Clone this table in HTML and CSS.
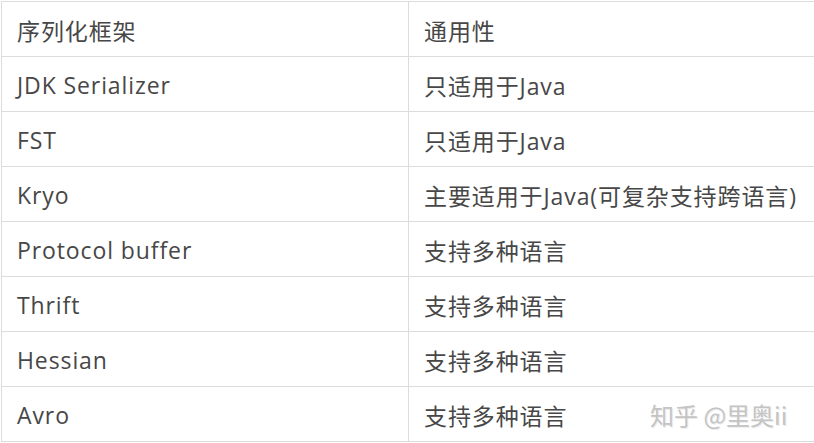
FILE: index.html
```html
<!DOCTYPE html>
<html lang="zh-CN">
<head>
<meta charset="utf-8">
<link rel="stylesheet" href="styles.css">
</head>
<body>
<div class="page">
  <table class="grid">
    <tr><td class="c1">序列化框架</td><td class="c2">通用性</td></tr>
    <tr><td class="c1">JDK Serializer</td><td class="c2">只适用于Java</td></tr>
    <tr><td class="c1">FST</td><td class="c2">只适用于Java</td></tr>
    <tr><td class="c1">Kryo</td><td class="c2">主要适用于Java(可复杂支持跨语言)</td></tr>
    <tr><td class="c1">Protocol buffer</td><td class="c2">支持多种语言</td></tr>
    <tr><td class="c1">Thrift</td><td class="c2">支持多种语言</td></tr>
    <tr><td class="c1">Hessian</td><td class="c2">支持多种语言</td></tr>
    <tr><td class="c1">Avro</td><td class="c2 last">支持多种语言<span class="mark">知乎 @里奥ii</span></td></tr>
  </table>
</div>
</body>
</html>
```
FILE: styles.css
```css
html, body {
  margin: 0;
  padding: 0;
  background: #fff;
}
.page {
  padding: 1px 0 0 1px;
  width: 814px;
  height: 443px;
  box-sizing: border-box;
  overflow: hidden;
}
.grid {
  border-collapse: collapse;
  width: 813px;
  table-layout: fixed;
  font-family: "Open Sans", "Noto Sans CJK SC", sans-serif;
  font-size: 23px;
  letter-spacing: 0.9px;
  color: #474747;
}
.grid td {
  border: 1px solid #dcdcdc;
  height: 55px;
  padding: 2px 0 0 15px;
  box-sizing: border-box;
  vertical-align: middle;
  white-space: nowrap;
  overflow: visible;
}
.grid .c1 {
  width: 407px;
}
.grid .c2 {
  border-right: none;
}
.last {
  position: relative;
}
.mark {
  position: absolute;
  left: 241px;
  top: 10px;
  font-family: "Noto Sans CJK SC", sans-serif;
  font-size: 24px;
  letter-spacing: 0;
  color: #c4c4c4;
  text-shadow: 1px 1px 0 #ececec;
}
```
